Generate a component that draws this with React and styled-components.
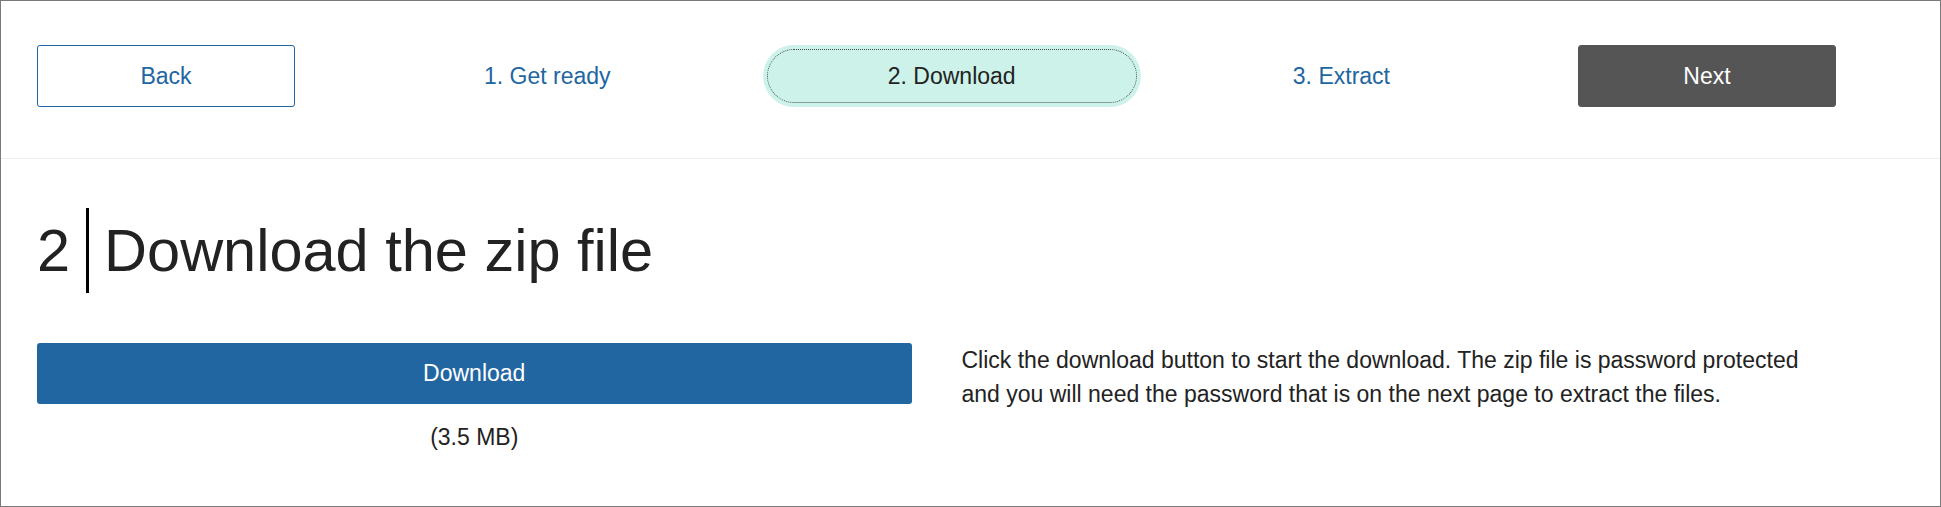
import React from "react";
import styled, { createGlobalStyle } from "styled-components";

const GlobalStyle = createGlobalStyle`
  html, body {
    margin: 0;
    padding: 0;
    background: #fff;
  }
  body {
    font-family: "Liberation Sans", Arial, sans-serif;
    font-size: 23px;
    color: #222;
  }
  * {
    box-sizing: border-box;
  }
`;

const Page = styled.div`
  width: 1941px;
  height: 507px;
  border: 1px solid #7a7a7a;
  overflow: hidden;
`;

const StepNav = styled.nav`
  padding: 44px 0 51px;
  border-bottom: 1px solid #efefef;
`;

const Container = styled.div`
  width: 1799px;
  margin-left: 36px;
`;

const NavRow = styled(Container)`
  display: flex;
  align-items: center;
`;

const NavButton = styled.button`
  width: 258px;
  height: 62px;
  flex-shrink: 0;
  font-family: inherit;
  font-size: 23px;
  border-radius: 3px;
  cursor: pointer;
  border: 1px solid ${(p) => (p.$primary ? "#555" : "#2166a1")};
  background: ${(p) => (p.$primary ? "#555" : "#fff")};
  color: ${(p) => (p.$primary ? "#fff" : "#2166a1")};
`;

const Steps = styled.ol`
  flex: 1;
  display: flex;
  align-items: center;
  justify-content: space-between;
  list-style: none;
  margin: 0 188px 0 189px;
  padding: 0;
`;

const Step = styled.li`
  color: ${(p) => (p.$active ? "#222" : "#2166a1")};
  white-space: nowrap;
`;

const ActivePill = styled.span`
  display: flex;
  align-items: center;
  justify-content: center;
  width: 378px;
  height: 62px;
  border-radius: 31px;
  background: #ccf2e9;
  outline: 1px dotted #444;
  outline-offset: -5px;
`;

const Main = styled(Container)`
  padding-top: 49px;
`;

const Heading = styled.h1`
  display: flex;
  align-items: center;
  margin: 0 0 50px;
  font-size: 59.5px;
  font-weight: normal;
  line-height: 85px;
  color: #222;
`;

const StepNumber = styled.span`
  padding-right: 16px;
`;

const HeadingText = styled.span`
  border-left: 3px solid #000;
  padding-left: 15px;
`;

const Columns = styled.div`
  display: grid;
  grid-template-columns: 1fr 1fr;
  column-gap: 50px;
  align-items: start;
`;

const DownloadCol = styled.div`
  display: flex;
  flex-direction: column;
  align-items: center;
`;

const DownloadButton = styled.button`
  width: 100%;
  height: 61px;
  font-family: inherit;
  font-size: 23px;
  color: #fff;
  background: #2166a1;
  border: none;
  border-radius: 3px;
  cursor: pointer;
`;

const FileSize = styled.div`
  margin-top: 16px;
  line-height: 34px;
`;

const Info = styled.p`
  margin: 0;
  line-height: 34px;
  padding-right: 20px;
`;

export default function App() {
  return (
    <>
      <GlobalStyle />
      <Page>
        <StepNav>
          <NavRow>
            <NavButton>Back</NavButton>
            <Steps>
              <Step>1. Get ready</Step>
              <Step $active>
                <ActivePill>2. Download</ActivePill>
              </Step>
              <Step>3. Extract</Step>
            </Steps>
            <NavButton $primary>Next</NavButton>
          </NavRow>
        </StepNav>
        <Main>
          <Heading>
            <StepNumber>2</StepNumber>
            <HeadingText>Download the zip file</HeadingText>
          </Heading>
          <Columns>
            <DownloadCol>
              <DownloadButton>Download</DownloadButton>
              <FileSize>(3.5 MB)</FileSize>
            </DownloadCol>
            <Info>
              Click the download button to start the download. The zip file is
              password protected and you will need the password that is on the
              next page to extract the files.
            </Info>
          </Columns>
        </Main>
      </Page>
    </>
  );
}
